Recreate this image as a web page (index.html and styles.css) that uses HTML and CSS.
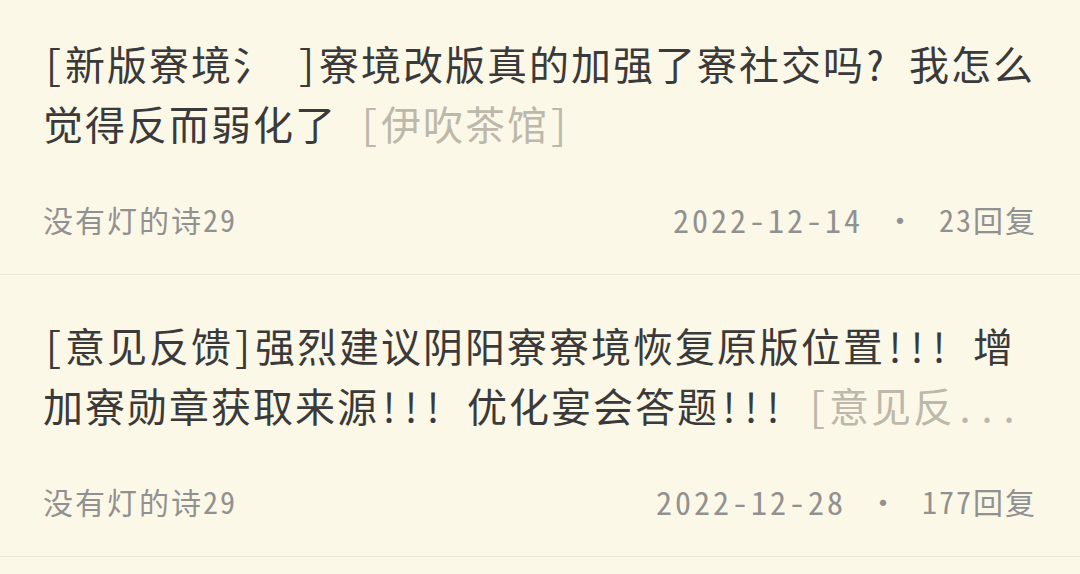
FILE: index.html
```html
<!DOCTYPE html>
<html>
<head>
    <title>寮境讨论</title>
    <link rel="stylesheet" href="styles.css">
</head>
<body>
    <div class="thread-list">
        <div class="thread">
            <div class="thread-title">[新版寮境氵 ]寮境改版真的加强了寮社交吗? 我怎么觉得反而弱化了 <span class="forum">[伊吹茶馆]</span></div>
            <div class="thread-meta">
                <span class="author">没有灯的诗29</span>
                <span class="date">2022-12-14</span>
                <span class="dot">·</span>
                <span class="replies">23回复</span>
            </div>
        </div>
        <div class="thread">
            <div class="thread-title">[意见反馈]强烈建议阴阳寮寮境恢复原版位置!!! 增加寮勋章获取来源!!! 优化宴会答题!!! <span class="forum">[意见反...</span></div>
            <div class="thread-meta">
                <span class="author">没有灯的诗29</span>
                <span class="date">2022-12-28</span>
                <span class="dot">·</span>
                <span class="replies">177回复</span>
            </div>
        </div>
    </div>
</body>
</html>
```

FILE: styles.css
```css
body {
    font-family: "Noto Sans Mono CJK SC", "Noto Sans CJK SC", monospace;
    background-color: #fcf8e8;
    margin: 0;
    padding: 0;
}

.thread-list {
    margin-top: -7px;
}

.thread {
    padding: 40px 43px 35px;
    border-bottom: 1px solid #ede9d7;
}

.thread-title {
    font-size: 40px;
    line-height: 60px;
    letter-spacing: 2px;
    color: #3a3a3a;
}

.forum {
    color: #bcb8ab;
}

.thread-meta {
    display: flex;
    align-items: center;
    margin-top: 46px;
    font-size: 30px;
    line-height: 40px;
    letter-spacing: 2px;
    color: #919191;
}

.author {
    flex: 1;
}

.date {
    font-size: 32px;
    letter-spacing: 3px;
}

.dot {
    margin: 0 22px;
}
```
